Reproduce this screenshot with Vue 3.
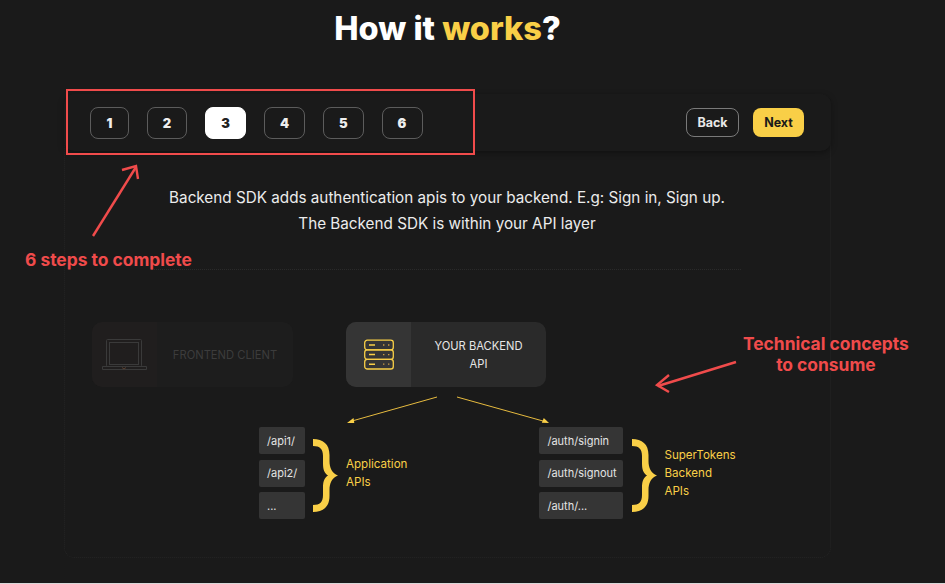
<script setup>
const steps = [
  { n: 1, w: 39 },
  { n: 2, w: 40 },
  { n: 3, w: 41, active: true },
  { n: 4, w: 41 },
  { n: 5, w: 40.5 },
  { n: 6, w: 41 }
]
const appRoutes = ['/api1/', '/api2/', '...']
const authRoutes = ['/auth/signin', '/auth/signout', '/auth/...']
const bracePath = 'M2 3C12 3 18.500 8 18.500 19V25C18.500 32 21 37 27 39.500C21 42 18.500 47 18.500 54V60C18.500 71 12 76 2 76V69C9 69 12 66 12 59V52C12 46 13 42 17 39.500C13 37 12 33 12 27V20C12 13 9 10 2 10Z'
</script>

<template>
  <div class="page">
    <h1 class="title">How it <span class="yellow">works</span>?</h1>

    <section class="card">
      <header class="bar">
        <div class="steps">
          <button
            v-for="s in steps"
            :key="s.n"
            class="step"
            :class="{ active: s.active }"
            :style="{ width: s.w + 'px' }"
          >{{ s.n }}</button>
        </div>
        <div class="nav">
          <button class="back">Back</button>
          <button class="next">Next</button>
        </div>
      </header>

      <div class="intro">
        <p>Backend SDK adds authentication apis to your backend. E.g: Sign in, Sign up.</p>
        <p>The Backend SDK is within your API layer</p>
      </div>
      <div class="divider"></div>

      <div class="nodes">
        <div class="node faded">
          <div class="node-icon">
            <svg width="46" height="34" viewBox="0 0 46 34" fill="none" stroke="#3a3a3a" stroke-width="1">
              <rect x="4.5" y="1.5" width="35" height="27" rx="1" />
              <rect x="7.5" y="4.5" width="29" height="22" />
              <path d="M0.5 28.5h44v3h-44z" />
              <path d="M20 29.5l2 1.5 2-1.5" stroke="#5a4030" />
            </svg>
          </div>
          <div class="node-label">FRONTEND CLIENT</div>
        </div>
        <div class="node">
          <div class="node-icon">
            <svg width="32" height="32" viewBox="0 0 32 32" fill="none" stroke="#f9cf47" stroke-width="1.3">
              <rect x="1.7" y="1.2" width="28.6" height="9.6" rx="2.6" />
              <rect x="1.7" y="10.8" width="28.6" height="9.6" rx="2.6" />
              <rect x="1.7" y="20.4" width="28.6" height="9.6" rx="2.6" />
              <path d="M6 6h6M6 15.6h6M6 25.2h6" stroke-width="1.5" />
              <path d="M20 6h1.4M25 6h1.4M20 15.6h1.4M25 15.6h1.4M20 25.2h1.4M25 25.2h1.4" stroke="#c89a44" />
            </svg>
          </div>
          <div class="node-label light">YOUR BACKEND<br />API</div>
        </div>
      </div>

      <svg class="links" width="767" height="35" viewBox="0 0 767 35" fill="none">
        <path d="M373 3L288 27" stroke="#e7bb3f" stroke-width="1" />
        <path d="M283 29l6.500-5 .8 5z" fill="#f9cf47" />
        <path d="M393 3L479 27" stroke="#e7bb3f" stroke-width="1" />
        <path d="M485 29l-7.200-.3 2-4.800z" fill="#f9cf47" />
      </svg>

      <div class="apis">
        <div class="api-group first">
          <div class="routes narrow">
            <div v-for="r in appRoutes" :key="r" class="route">{{ r }}</div>
          </div>
          <svg class="brace" width="28" height="79" viewBox="0 0 28 79">
            <path :d="bracePath" fill="#f9cf47" />
          </svg>
          <div class="api-name">Application<br />APIs</div>
        </div>
        <div class="api-group second">
          <div class="routes wide">
            <div v-for="r in authRoutes" :key="r" class="route">{{ r }}</div>
          </div>
          <svg class="brace" width="28" height="79" viewBox="0 0 28 79">
            <path :d="bracePath" fill="#f9cf47" />
          </svg>
          <div class="api-name">SuperTokens<br />Backend<br />APIs</div>
        </div>
      </div>
    </section>

    <!-- annotations laid over the screenshot -->
    <div class="red-box"></div>
    <svg class="marks" width="945" height="584" viewBox="0 0 945 584" fill="none" stroke="#f04b4b" stroke-width="2.400">
      <path d="M93 236L136 167" />
      <path d="M122 170L136 166L138 179" />
      <path d="M736 362L658 386" />
      <path d="M669 375L657 385L669 392" />
    </svg>
    <div class="note note-steps">6 steps to complete</div>
    <div class="note note-tech">Technical concepts<br />to consume</div>
  </div>
</template>

<style>
html, body {
  margin: 0;
  background: #1a1a1a;
}
</style>

<style scoped>
.page {
  position: relative;
  width: 945px;
  height: 583px;
  overflow: hidden;
  background: #1a1a1a;
  border-bottom: 1px solid #d8d8d8;
  font-family: Inter, "Open Sans", sans-serif;
  color: #fff;
}
.title {
  margin: 0;
  width: 895px;
  height: 94px;
  padding-top: 9px;
  box-sizing: border-box;
  text-align: center;
  font-size: 32.500px;
  line-height: 40px;
  font-weight: 800;
}
.yellow { color: #f9cf47; }
.card {
  width: 767px;
  height: 464px;
  margin-left: 64px;
  box-sizing: border-box;
  border: 1px dotted #252525;
  border-radius: 10px;
}
.bar {
  height: 57px;
  margin: -1px -1px 0;
  display: flex;
  justify-content: space-between;
  align-items: center;
  padding: 0 27px 0 26px;
  background: #1a1a1a;
  border-radius: 10px;
  box-shadow: 0 2px 6px rgba(0, 0, 0, 0.35);
}
.steps {
  display: flex;
  gap: 18px;
}
.step {
  height: 32px;
  padding: 0;
  box-sizing: border-box;
  background: transparent;
  border: 1px solid #5c5c5c;
  border-radius: 8px;
  color: #eee;
  font: 900 13px Inter, sans-serif;
}
.step.active {
  background: #fff;
  border-color: #fff;
  color: #222;
}
.nav {
  display: flex;
  gap: 14px;
}
.back, .next {
  height: 29px;
  padding: 0;
  box-sizing: border-box;
  border-radius: 8px;
  font: 700 12.500px Inter, sans-serif;
}
.back {
  width: 53px;
  background: transparent;
  border: 1px solid #7a7a7a;
  color: #e8e8e8;
}
.next {
  width: 51px;
  background: #f9cf47;
  border: 0;
  color: #1a1a1a;
}
.intro {
  margin: 34px 1px 0 0;
  text-align: center;
  font-size: 15.250px;
  line-height: 26px;
  color: #ececec;
}
.intro p { margin: 0; }
.divider {
  width: 590px;
  margin: 32px 0 0 86px;
  border-top: 1px dotted #2a2a2a;
}
.nodes {
  display: flex;
  gap: 53px;
  margin: 52px 0 0 27px;
}
.node {
  width: 200px;
  height: 65px;
  display: flex;
  border-radius: 10px;
  overflow: hidden;
  background: #2a2a2a;
}
.node-icon {
  width: 65px;
  display: flex;
  align-items: center;
  justify-content: center;
  background: #353535;
}
.node-label {
  flex: 1;
  display: flex;
  align-items: center;
  justify-content: center;
  padding-top: 1px;
  text-align: center;
  font-size: 11.200px;
  line-height: 18.500px;
  color: #3c3c3c;
}
.node-label.light { color: #e6e6e6; }
.faded {
  width: 201px;
  background: #1d1d1d;
}
.faded .node-icon { background: #201e1e; }
.links {
  display: block;
  margin: 7px 0 0 -1px;
}
.apis {
  display: flex;
  margin: -2px 0 0 194px;
}
.api-group {
  display: flex;
  align-items: center;
}
.second { margin-left: 132px; }
.routes {
  display: flex;
  flex-direction: column;
  gap: 5.500px;
}
.narrow { width: 46px; }
.wide { width: 84px; }
.route {
  height: 27px;
  box-sizing: border-box;
  padding-left: 8px;
  display: flex;
  align-items: center;
  background: #353535;
  border-radius: 2px;
  font-size: 11px;
  color: #e4e4e4;
  white-space: nowrap;
}
.brace {
  margin: 5px 0 0 7px;
  flex: none;
}
.first .brace { margin-left: 6px; }
.api-name {
  margin-left: 7px;
  font-size: 11.600px;
  line-height: 18.300px;
  color: #f9cf47;
}
.second .api-name { margin-left: 6px; }
.red-box {
  position: absolute;
  left: 66px;
  top: 89px;
  width: 409px;
  height: 66px;
  box-sizing: border-box;
  border: 2px solid #f04b4b;
}
.marks {
  position: absolute;
  left: 0;
  top: 0;
}
.note {
  position: absolute;
  font-size: 17.400px;
  line-height: 21px;
  font-weight: 700;
  color: #f04b4b;
  white-space: nowrap;
}
.note-steps {
  left: 25px;
  top: 249px;
}
.note-tech {
  left: 743px;
  top: 333px;
  text-align: center;
}
</style>
